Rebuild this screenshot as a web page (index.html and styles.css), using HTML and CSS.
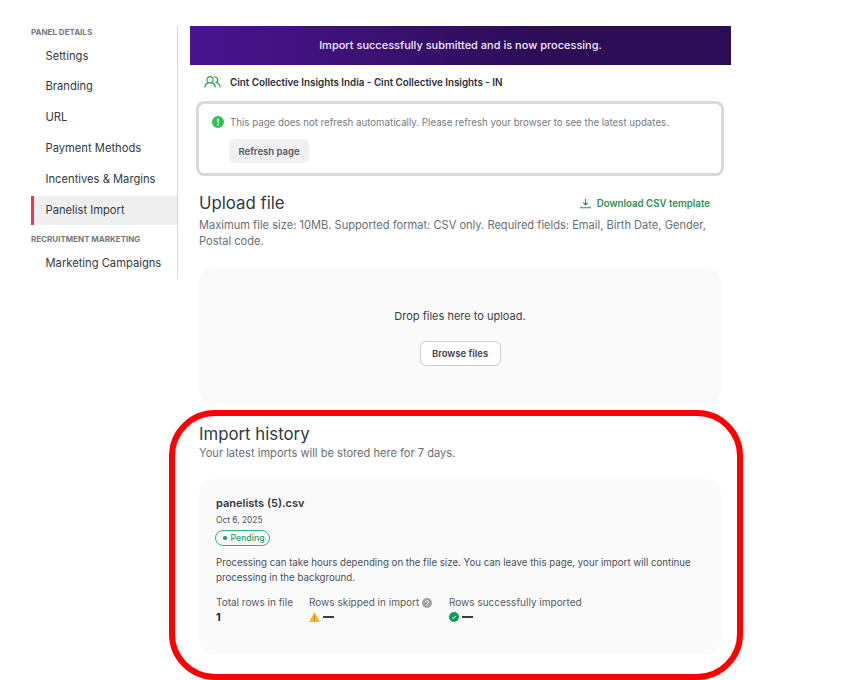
FILE: index.html
```html
<!DOCTYPE html>
<html lang="en">
<head>
<meta charset="utf-8">
<title>Panelist Import</title>
<link rel="stylesheet" href="styles.css">
</head>
<body>
<div class="shell">
  <nav class="sidebar">
    <div class="nav-label first">PANEL DETAILS</div>
    <a class="nav-item">Settings</a>
    <a class="nav-item">Branding</a>
    <a class="nav-item">URL</a>
    <a class="nav-item">Payment Methods</a>
    <a class="nav-item">Incentives &amp; Margins</a>
    <a class="nav-item active">Panelist Import</a>
    <div class="nav-label second">RECRUITMENT MARKETING</div>
    <a class="nav-item">Marketing Campaigns</a>
  </nav>
  <main class="content">
    <div class="banner">Import successfully submitted and is now processing.</div>
    <div class="org">
      <svg class="org-icon" width="17" height="12" viewBox="0 0 17 12" fill="none" stroke="#2e9e5b" stroke-width="1.2" stroke-linecap="round"><circle cx="6" cy="3.800" r="3.100"/><path d="M.8 11c.4-2.500 2-3.800 3.400-4.100M11.200 11c-.4-2.500-2-3.800-3.400-4.100"/><path d="M10.500.8a3.100 3.100 0 0 1 1.600 5.800M16.200 11c-.3-2.100-1.500-3.500-3-4.100"/></svg>
      <span>Cint Collective Insights India - Cint Collective Insights - IN</span>
    </div>
    <section class="notice">
      <div class="notice-line">
        <svg width="12" height="12" viewBox="0 0 12 12"><circle cx="6" cy="6" r="6" fill="#2fc05a"/><rect x="5.300" y="2.600" width="1.400" height="4" fill="#fff"/><rect x="5.300" y="7.800" width="1.400" height="1.500" fill="#fff"/></svg>
        <span>This page does not refresh automatically. Please refresh your browser to see the latest updates.</span>
      </div>
      <button class="refresh">Refresh page</button>
    </section>
    <section class="upload">
      <div class="upload-head">
        <h2>Upload file</h2>
        <a class="download">
          <svg width="11" height="11" viewBox="0 0 11 11" fill="none" stroke="#2e8f4e" stroke-width="1.100"><path d="M5.500 1v5.800M3.300 4.700l2.200 2.200 2.200-2.200M1 8.500v1.300h9V8.500"/></svg>
          Download CSV template
        </a>
      </div>
      <p class="sub">Maximum file size: 10MB. Supported format: CSV only. Required fields: Email, Birth Date, Gender, Postal code.</p>
      <div class="drop">
        <div class="drop-text">Drop files here to upload.</div>
        <button class="browse">Browse files</button>
      </div>
    </section>
    <section class="history">
      <h2>Import history</h2>
      <p class="sub">Your latest imports will be stored here for 7 days.</p>
      <div class="card">
        <div class="file">panelists (5).csv</div>
        <div class="date">Oct 6, 2025</div>
        <div class="pill"><i class="dot"></i>Pending</div>
        <p class="desc">Processing can take hours depending on the file size. You can leave this page, your import will continue processing in the background.</p>
        <div class="stats">
          <div class="stat s1">
            <div class="stat-label">Total rows in file</div>
            <div class="stat-value">1</div>
          </div>
          <div class="stat s2">
            <div class="stat-label">Rows skipped in import
              <svg width="10" height="10" viewBox="0 0 10 10"><circle cx="5" cy="5" r="5" fill="#a3a3a3"/><path d="M3.500 4a1.500 1.400 0 1 1 2.200 1.200c-.5.3-.7.5-.7 1" fill="none" stroke="#fff" stroke-width="1"/><rect x="4.500" y="7" width="1" height="1" fill="#fff"/></svg>
            </div>
            <div class="stat-value">
              <svg width="11" height="10" viewBox="0 0 11 10"><path d="M5.500 0 11 10H0z" fill="#f5b921"/><rect x="5" y="3.500" width="1" height="3.500" fill="#a88410"/><rect x="5" y="7.700" width="1" height="1" fill="#a88410"/></svg>
              <i class="dash"></i>
            </div>
          </div>
          <div class="stat">
            <div class="stat-label">Rows successfully imported</div>
            <div class="stat-value">
              <svg width="10" height="10" viewBox="0 0 10 10"><circle cx="5" cy="5" r="5" fill="#0f9d58"/><path d="M3 5.200 4.400 6.500 7 3.800" fill="none" stroke="#fff" stroke-width="1"/></svg>
              <i class="dash"></i>
            </div>
          </div>
        </div>
      </div>
    </section>
  </main>
</div>
<div class="highlight"></div>
</body>
</html>
```
FILE: styles.css
```css
* { box-sizing: border-box; }
html, body { margin: 0; height: 680px; overflow: hidden; background: #fff; }
body { font-family: Inter, "Liberation Sans", sans-serif; color: #333; position: relative; }
h2, p { margin: 0; }
.shell { display: flex; align-items: flex-start; padding: 26px 0 0; }
.sidebar { width: 178px; height: 253px; padding-left: 31px; border-right: 1px solid #d4d4d4; flex: none; display: flex; flex-direction: column; }
.nav-label { font-size: 8px; font-weight: 700; color: #77777f; line-height: 12px; flex: none; }
.nav-label.first { height: 14.600px; }
.nav-label.second { margin-top: 8.500px; height: 15px; }
.nav-item { font-size: 11.200px; line-height: 30.800px; height: 30.800px; padding-left: 14.500px; color: #333a42; flex: none; white-space: nowrap; }
.nav-item.active { margin-top: 1.400px; height: 29px; line-height: 29px; background: #efefef; border-left: 3px solid #f43350; padding-left: 11.500px; }
.content { width: 541px; margin-left: 12px; flex: none; }
.banner { height: 39px; background: linear-gradient(90deg, #4a1590 0%, #2b0c55 68%, #2b0c55 100%); color: #f0eaf8; font-size: 11px; font-weight: 500; text-align: center; line-height: 38px; }
.org { display: flex; align-items: center; gap: 9px; height: 34px; padding-left: 14px; font-size: 9.800px; font-weight: 600; color: #2a2f36; }
.notice { margin: 2px 7px 0 6px; height: 75px; border: 3px solid #d9d9d9; border-radius: 8px; padding: 11px 11px 0 13px; background: #fff; }
.notice-line { display: flex; align-items: center; gap: 6px; font-size: 9.700px; color: #767b80; height: 14px; }
.refresh { display: block; margin: 10px 0 0 17px; width: 80px; height: 24px; border: 0; border-radius: 6px; background: #f0f0f0; color: #55585c; font: 600 9.500px Inter, "Liberation Sans", sans-serif; padding: 0; }
.upload { margin: 15px 10px 0 9px; }
.upload-head { display: flex; justify-content: space-between; align-items: center; height: 25px; }
.upload h2, .history h2 { font-size: 16.800px; font-weight: 400; color: #333a42; line-height: 25px; }
.download { display: flex; align-items: center; gap: 6px; font-size: 9.700px; font-weight: 600; color: #2e8f4e; padding-right: 11px; }
.sub { font-size: 11.100px; line-height: 16px; color: #6a6f75; margin-top: 1px; }
.drop { margin-top: 18px; height: 138px; background: #fafafa; border-radius: 14px; display: flex; flex-direction: column; align-items: center; padding-top: 41px; }
.drop-text { font-size: 11px; line-height: 16px; color: #3b3f45; }
.browse { margin-top: 17px; width: 81px; height: 25px; background: #fff; border: 1px solid #cfcfcf; border-radius: 6px; font: 600 9.500px Inter, "Liberation Sans", sans-serif; color: #3f4347; padding: 0; }
.history { margin: 17px 10px 0 9px; }
.history h2 { line-height: 24px; }
.history .sub { margin-top: 0; line-height: 15px; }
.card { margin-top: 18px; height: 175px; background: #fafafa; border-radius: 14px; padding: 16px 17px 0; }
.file { font-size: 11px; font-weight: 600; line-height: 16px; color: #33373d; }
.date { font-size: 8.400px; line-height: 12px; margin-top: 3px; color: #4b4f55; }
.pill { display: flex; align-items: center; gap: 4px; margin: 4px 0 0 -1px; height: 16px; width: 55px; padding-left: 7px; border: 1px solid #2db283; border-radius: 8px; font-size: 8.700px; font-weight: 500; color: #1c9c6d; }
.dot { width: 3.500px; height: 3.500px; border-radius: 50%; background: #1c9c6d; }
.desc { margin-top: 10px; font-size: 9.700px; line-height: 14.500px; color: #4b4f55; }
.stats { display: flex; margin-top: 11px; }
.s1 { width: 93px; }
.s2 { width: 140px; }
.stat-label { font-size: 10px; line-height: 13px; color: #565a60; white-space: nowrap; display: flex; align-items: center; gap: 3px; }
.stat-value { display: flex; align-items: center; gap: 3px; height: 15px; font-size: 11px; font-weight: 700; color: #22262b; }
.dash { width: 11px; height: 2px; background: #3a3e44; }
.highlight { position: absolute; left: 169px; top: 410px; width: 574px; height: 270px; border: 6px solid #f00; border-radius: 46px; pointer-events: none; }
```
